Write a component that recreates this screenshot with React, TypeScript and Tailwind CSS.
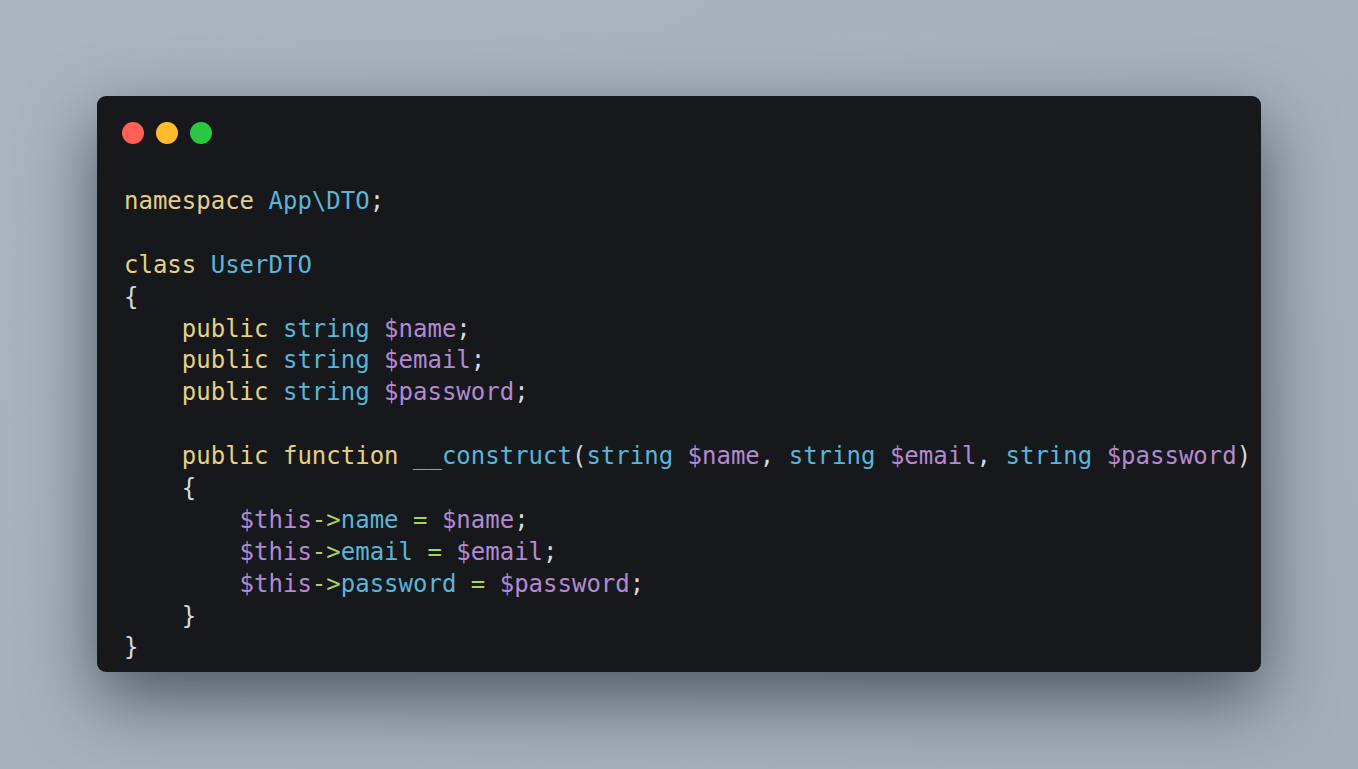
import * as React from "react";

type Tok = [string, string];

const Y = "text-[#e6d086]";
const C = "text-[#5bb5d8]";
const P = "text-[#b38ad2]";
const G = "text-[#a8d35e]";
const W = "text-[#d6d8db]";

const lines: Tok[][] = [
    [[Y, "namespace"], [W, " "], [C, "App\\DTO"], [W, ";"]],
    [],
    [[Y, "class"], [W, " "], [C, "UserDTO"]],
    [[W, "{"]],
    [[W, "    "], [Y, "public"], [W, " "], [C, "string"], [W, " "], [P, "$name"], [W, ";"]],
    [[W, "    "], [Y, "public"], [W, " "], [C, "string"], [W, " "], [P, "$email"], [W, ";"]],
    [[W, "    "], [Y, "public"], [W, " "], [C, "string"], [W, " "], [P, "$password"], [W, ";"]],
    [],
    [
        [W, "    "], [Y, "public"], [W, " "], [Y, "function"], [W, " "], [C, "__construct"], [W, "("],
        [C, "string"], [W, " "], [P, "$name"], [W, ", "],
        [C, "string"], [W, " "], [P, "$email"], [W, ", "],
        [C, "string"], [W, " "], [P, "$password"], [W, ")"],
    ],
    [[W, "    {"]],
    [[W, "        "], [P, "$this"], [G, "->"], [C, "name"], [W, " "], [G, "="], [W, " "], [P, "$name"], [W, ";"]],
    [[W, "        "], [P, "$this"], [G, "->"], [C, "email"], [W, " "], [G, "="], [W, " "], [P, "$email"], [W, ";"]],
    [[W, "        "], [P, "$this"], [G, "->"], [C, "password"], [W, " "], [G, "="], [W, " "], [P, "$password"], [W, ";"]],
    [[W, "    }"]],
    [[W, "}"]],
];

// window controls
function Dots() {
    return (
        <div className="flex gap-[12px]">
            <span className="block h-[22px] w-[22px] rounded-full bg-[#ff5f57]" />
            <span className="block h-[22px] w-[22px] rounded-full bg-[#febc2e]" />
            <span className="block h-[22px] w-[22px] rounded-full bg-[#28c840]" />
        </div>
    );
}

export default function App() {
    return (
        <div className="flex h-[769px] w-[1358px] items-start justify-start bg-gradient-to-br from-[#abb5bf] via-[#a7b1bb] to-[#a3adb8] pl-[97px] pt-[96px]">
            <div className="h-[576px] w-[1164px] rounded-[9px] bg-[#16181b] shadow-[0_26px_70px_rgba(20,28,38,0.6)]">
                <div className="px-[25px] pt-[26px]">
                    <Dots />
                </div>
                <pre
                    className="mt-[42px] whitespace-pre pl-[27px] text-[24px] leading-[31.9px]"
                    style={{ fontFamily: '"DejaVu Sans Mono", "Liberation Mono", monospace' }}
                >
                    {lines.map((line, i) => (
                        <div key={i} className="h-[31.9px]">
                            {line.map(([cls, txt], j) => (
                                <span key={j} className={cls}>
                                    {txt}
                                </span>
                            ))}
                        </div>
                    ))}
                </pre>
            </div>
        </div>
    );
}
